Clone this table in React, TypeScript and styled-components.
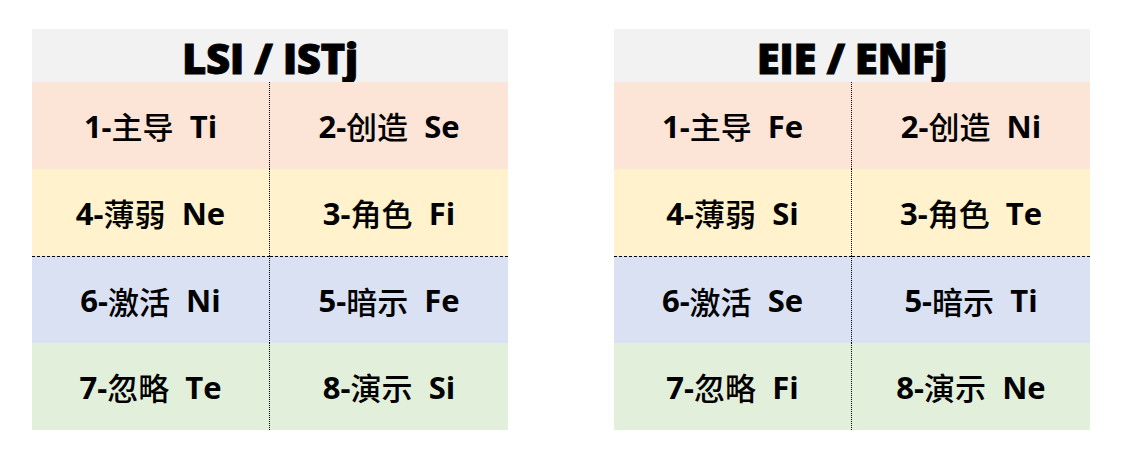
import React from "react";
import styled, { createGlobalStyle } from "styled-components";

const GlobalStyle = createGlobalStyle`
  html, body {
    margin: 0;
    padding: 0;
    background: #ffffff;
  }
  body {
    font-family: "Open Sans", "Noto Sans CJK SC", sans-serif;
    color: #000000;
  }
`;

const rowColors = ["#fce4d6", "#fff2cc", "#d9e1f2", "#e2efda"];

const Page = styled.div`
  display: flex;
  gap: 106px;
  padding: 29px 0 0 32px;
  width: 1125px;
  height: 465px;
  box-sizing: border-box;
`;

const Table = styled.div`
  width: 476px;
  display: flex;
  flex-direction: column;
`;

const Title = styled.div`
  height: 53px;
  background: #f2f2f2;
  display: flex;
  align-items: center;
  justify-content: center;
  font-family: "Open Sans", sans-serif;
  font-weight: 800;
  font-size: 42px;
  letter-spacing: -0.5px;
  padding-top: 4px;
  box-sizing: border-box;
  -webkit-text-stroke: 0.8px #000;
`;

const Grid = styled.div`
  display: grid;
  grid-template-columns: 238px 238px;
  grid-auto-rows: 87px;
`;

const Cell = styled.div<{ $bg: string; $left: boolean; $dashTop: boolean }>`
  background: ${(p) => p.$bg};
  display: flex;
  align-items: center;
  justify-content: center;
  white-space: pre;
  font-size: 31px;
  box-sizing: border-box;
  border-right: ${(p) => (p.$left ? "1px dotted #000" : "none")};
  border-top: ${(p) => (p.$dashTop ? "1px dashed #000" : "none")};
`;

const Num = styled.span`
  font-weight: 700;
`;

const Han = styled.span`
  font-family: "Noto Sans CJK SC", sans-serif;
  font-weight: 500;
`;

const Fn = styled.span`
  font-weight: 700;
`;

type Entry = [string, string, string];

const tables: { title: string; cells: Entry[] }[] = [
  {
    title: "LSI / ISTj",
    cells: [
      ["1", "主导", "Ti"],
      ["2", "创造", "Se"],
      ["4", "薄弱", "Ne"],
      ["3", "角色", "Fi"],
      ["6", "激活", "Ni"],
      ["5", "暗示", "Fe"],
      ["7", "忽略", "Te"],
      ["8", "演示", "Si"],
    ],
  },
  {
    title: "EIE / ENFj",
    cells: [
      ["1", "主导", "Fe"],
      ["2", "创造", "Ni"],
      ["4", "薄弱", "Si"],
      ["3", "角色", "Te"],
      ["6", "激活", "Se"],
      ["5", "暗示", "Ti"],
      ["7", "忽略", "Fi"],
      ["8", "演示", "Ne"],
    ],
  },
];

export default function App() {
  return (
    <>
      <GlobalStyle />
      <Page>
        {tables.map((t) => (
          <Table key={t.title}>
            <Title>{t.title}</Title>
            <Grid>
              {t.cells.map(([n, han, fn], i) => {
                const row = Math.floor(i / 2);
                return (
                  <Cell
                    key={i}
                    $bg={rowColors[row]}
                    $left={i % 2 === 0}
                    $dashTop={row === 2}
                  >
                    <Num>{n}-</Num>
                    <Han>{han}</Han>
                    <Fn>{"  " + fn}</Fn>
                  </Cell>
                );
              })}
            </Grid>
          </Table>
        ))}
      </Page>
    </>
  );
}
